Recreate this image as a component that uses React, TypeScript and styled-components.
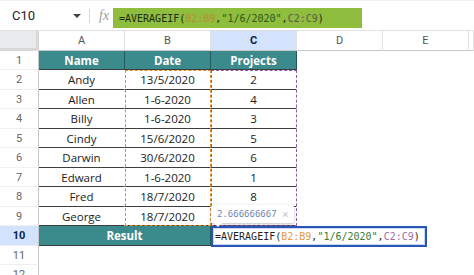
import { Fragment } from "react";
import styled, { createGlobalStyle, css } from "styled-components";

const GlobalStyle = createGlobalStyle`
  html, body {
    margin: 0;
    padding: 0;
    background: #ffffff;
    overflow: hidden;
  }
  * { box-sizing: border-box; }
`;

const TEAL = "#3b8a8c";
const LINE = "#e1e1e1";
const DARK = "#3d3d3d";

interface Row {
  name: string;
  date: string;
  projects: string;
}

const rows: Row[] = [
  { name: "Andy", date: "13/5/2020", projects: "2" },
  { name: "Allen", date: "1-6-2020", projects: "4" },
  { name: "Billy", date: "1-6-2020", projects: "3" },
  { name: "Cindy", date: "15/6/2020", projects: "5" },
  { name: "Darwin", date: "30/6/2020", projects: "6" },
  { name: "Edward", date: "1-6-2020", projects: "1" },
  { name: "Fred", date: "18/7/2020", projects: "8" },
  { name: "George", date: "18/7/2020", projects: "2" },
];

const columns = ["A", "B", "C", "D", "E"];

type Pos = { $r: number; $c: number; $span?: number };

// every grid item is placed explicitly, so the overlays don't push cells around
const place = css<Pos>`
  grid-row: ${({ $r }) => $r};
  grid-column: ${({ $c, $span }) => `${$c} / span ${$span ?? 1}`};
`;

const Page = styled.div`
  width: 474px;
  height: 275px;
  display: flex;
  flex-direction: column;
  font-family: Roboto, "Liberation Sans", sans-serif;
`;

const FormulaBar = styled.div`
  flex-shrink: 0;
  height: 30px;
  display: flex;
  align-items: center;
  border-top: 1px solid #f0f0f0;
`;

const NameBox = styled.div`
  width: 89px;
  display: flex;
  align-items: center;
  justify-content: space-between;
  padding: 0 8px 0 12px;
  font-size: 13px;
  color: #222;
`;

const Caret = styled.span`
  width: 0;
  height: 0;
  border-left: 4px solid transparent;
  border-right: 4px solid transparent;
  border-top: 4px solid #444;
`;

const Divider = styled.span`
  width: 1px;
  height: 14px;
  background: #d6d6d6;
`;

const Fx = styled.span`
  width: 23px;
  padding-left: 9px;
  font-family: "Liberation Serif", serif;
  font-style: italic;
  font-size: 14px;
  color: #a0a0a0;
`;

const FormulaInput = styled.div`
  width: 249px;
  height: 20px;
  margin-top: 5px;
  padding-left: 6px;
  display: flex;
  align-items: center;
  background: #8fbd3e;
`;

const Code = styled.span<{ $tone?: string }>`
  font-family: "DejaVu Sans Mono", "Liberation Mono", monospace;
  font-size: 10px;
  white-space: pre;
  color: ${({ $tone }) => $tone ?? "#1f1f1f"};
`;

const Sheet = styled.div`
  flex-shrink: 0;
  display: grid;
  grid-template-columns: 39px repeat(5, 86px) 1fr;
  grid-template-rows: 21px repeat(6, 19px 20px);
`;

const Corner = styled.div<Pos>`
  ${place};
  background: #e9eaec;
  border-top: 1px solid ${LINE};
  border-right: 3px solid #d8d8d8;
  border-bottom: 3px solid #d8d8d8;
`;

const ColHead = styled.div<Pos & { $active?: boolean }>`
  ${place};
  display: flex;
  align-items: center;
  justify-content: center;
  font-size: 11px;
  color: ${({ $active }) => ($active ? "#0b1f44" : "#555")};
  font-weight: ${({ $active }) => ($active ? 700 : 400)};
  background: ${({ $active }) => ($active ? "#d3e3fd" : "#fff")};
  border-top: 1px solid ${LINE};
  border-right: 1px solid ${LINE};
  border-bottom: 1px solid #c7c7c7;
`;

const RowHead = styled.div<Pos & { $active?: boolean }>`
  ${place};
  display: flex;
  align-items: center;
  justify-content: center;
  font-size: 11px;
  color: ${({ $active }) => ($active ? "#0b1f44" : "#666")};
  font-weight: ${({ $active }) => ($active ? 700 : 400)};
  background: ${({ $active }) => ($active ? "#d3e3fd" : "#fff")};
  border-right: 1px solid #c7c7c7;
  border-bottom: 1px solid #efefef;
`;

const Cell = styled.div<Pos & { $head?: boolean }>`
  ${place};
  display: flex;
  align-items: center;
  justify-content: center;
  font-family: "Open Sans", "Liberation Sans", sans-serif;
  font-size: 11.5px;
  font-weight: ${({ $head }) => ($head ? 700 : 400)};
  color: ${({ $head }) => ($head ? "#ffffff" : "#1b1b1b")};
  background: ${({ $head }) => ($head ? TEAL : "#ffffff")};
  border-bottom: 1px solid ${DARK};
  border-right: 1px solid ${({ $head }) => ($head ? "#24595b" : "transparent")};
`;

const Marquee = styled.div<{ $col: number; $color: string }>`
  grid-column: ${({ $col }) => $col};
  grid-row: 3 / 11;
  border: 1px dashed ${({ $color }) => $color};
  pointer-events: none;
  z-index: 1;
`;

const TipSlot = styled.div<Pos>`
  ${place};
  position: relative;
  z-index: 3;
`;

const Tooltip = styled.div`
  position: absolute;
  left: 0;
  bottom: 3px;
  height: 18px;
  padding: 0 6px;
  display: flex;
  align-items: center;
  gap: 6px;
  background: #fff;
  border-radius: 2px;
  box-shadow: 0 1px 3px rgba(60, 64, 67, 0.35);
  &::after {
    content: "";
    position: absolute;
    left: 3px;
    bottom: -4px;
    border-left: 4px solid transparent;
    border-right: 4px solid transparent;
    border-top: 4px solid #fff;
  }
`;

const TipValue = styled.span`
  font-family: "DejaVu Sans Mono", "Liberation Mono", monospace;
  font-size: 9px;
  color: #7085b5;
`;

const TipClose = styled.span`
  font-size: 11px;
  color: #c4c4c4;
`;

const EditorSlot = styled.div<Pos>`
  ${place};
  position: relative;
  background: ${TEAL};
  z-index: 2;
`;

const Editor = styled.div`
  position: absolute;
  left: 0;
  top: 0;
  width: 216px;
  height: 21px;
  padding-left: 2px;
  display: flex;
  align-items: center;
  background: #fff;
  border: 2px solid #2a55b4;
  box-shadow: 0 0 0 1px #c9d8f5 inset;
`;

const Formula = ({ big }: { big?: boolean }) => {
  const plain = big ? "#1f1f1f" : "#1d2810";
  return (
    <>
      <Code $tone={plain}>=AVERAGEIF(</Code>
      <Code $tone={big ? "#e39a45" : "#b58e36"}>B2:B9</Code>
      <Code $tone={plain}>,</Code>
      <Code $tone={big ? "#3b7a33" : "#2b5a1c"}>"1/6/2020"</Code>
      <Code $tone={plain}>,</Code>
      <Code $tone={big ? "#9a6fa6" : "#5d5a48"}>C2:C9</Code>
      <Code $tone={plain}>)</Code>
    </>
  );
};

export default function App() {
  return (
    <Page>
      <GlobalStyle />
      <FormulaBar>
        <NameBox>
          C10
          <Caret />
        </NameBox>
        <Divider />
        <Fx>fx</Fx>
        <FormulaInput>
          <Formula />
        </FormulaInput>
      </FormulaBar>

      <Sheet>
        <Corner $r={1} $c={1} />
        {columns.map((c, i) => (
          <ColHead key={c} $r={1} $c={i + 2} $active={c === "C"}>
            {c}
          </ColHead>
        ))}
        <ColHead $r={1} $c={7} />

        <RowHead $r={2} $c={1}>1</RowHead>
        <Cell $r={2} $c={2} $head>Name</Cell>
        <Cell $r={2} $c={3} $head>Date</Cell>
        <Cell $r={2} $c={4} $head>Projects</Cell>

        {rows.map((r, i) => (
          <Fragment key={r.name}>
            <RowHead $r={i + 3} $c={1}>{i + 2}</RowHead>
            <Cell $r={i + 3} $c={2}>{r.name}</Cell>
            <Cell $r={i + 3} $c={3}>{r.date}</Cell>
            <Cell $r={i + 3} $c={4}>{i === 7 ? "" : r.projects}</Cell>
          </Fragment>
        ))}

        <RowHead $r={11} $c={1} $active>10</RowHead>
        <Cell $r={11} $c={2} $span={2} $head>
          Result
        </Cell>
        <EditorSlot $r={11} $c={4}>
          <Editor>
            <Formula big />
          </Editor>
        </EditorSlot>

        <RowHead $r={12} $c={1}>11</RowHead>
        <RowHead $r={13} $c={1}>12</RowHead>

        <Marquee $col={3} $color="#e08a2c" />
        <Marquee $col={4} $color="#8a5aa8" />
        <TipSlot $r={10} $c={4}>
          <Tooltip>
            <TipValue>2.666666667</TipValue>
            <TipClose>×</TipClose>
          </Tooltip>
        </TipSlot>
      </Sheet>
    </Page>
  );
}
